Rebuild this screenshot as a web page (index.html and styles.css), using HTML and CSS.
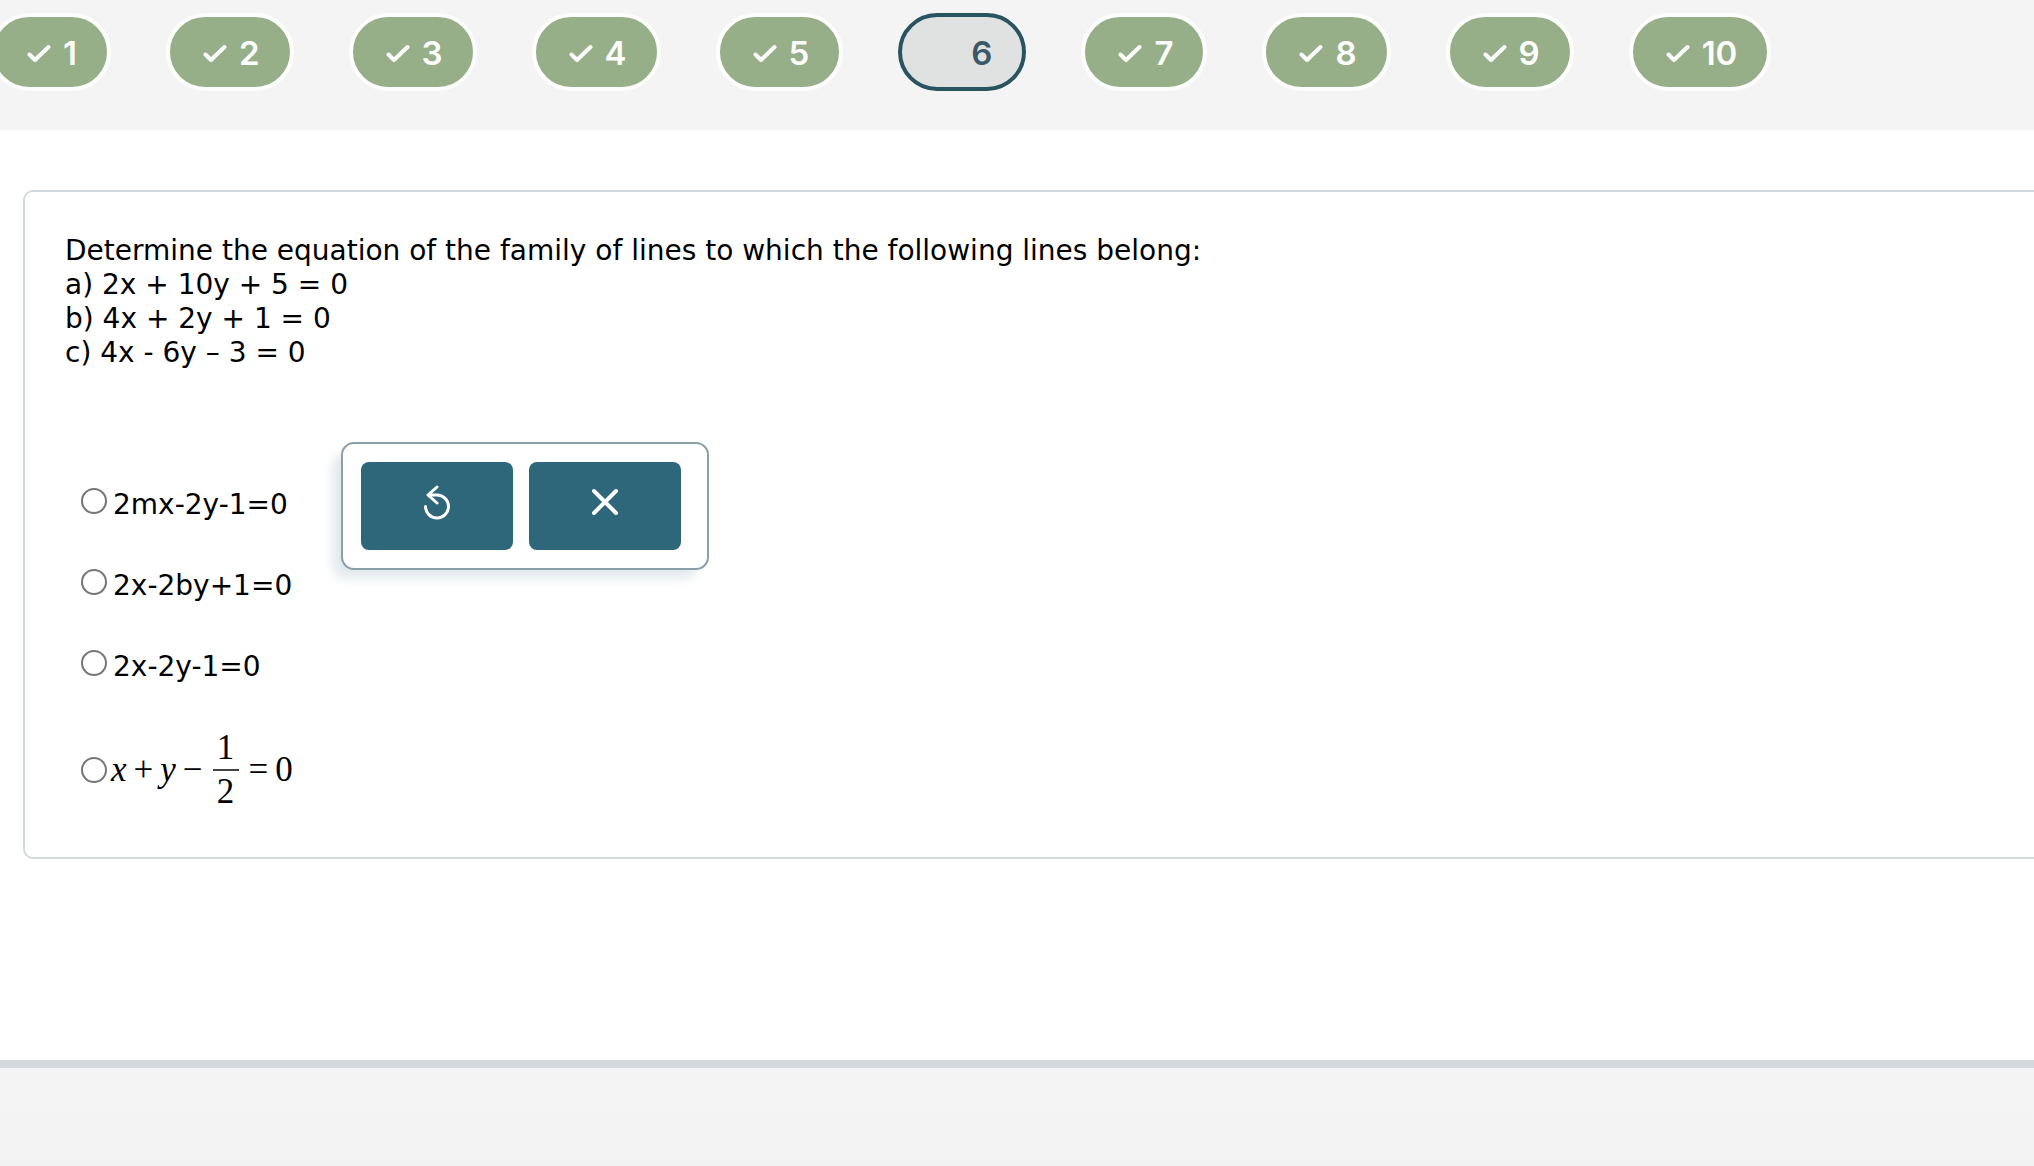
FILE: index.html
```html
<!DOCTYPE html>
<html lang="en">
<head>
    <meta charset="UTF-8">
    <meta name="viewport" content="width=device-width, initial-scale=1.0">
    <title>Family of lines</title>
    <link rel="stylesheet" href="styles.css">
</head>
<body>
    <svg class="symbols" aria-hidden="true">
        <symbol id="check" viewBox="0 0 24 24">
            <path d="M2.5 13.5L8 19L21.5 6" fill="none" stroke="currentColor" stroke-width="4" stroke-linecap="round" stroke-linejoin="round"/>
        </symbol>
    </svg>

    <nav class="steps">
        <button class="step"><svg><use href="#check"/></svg>1</button>
        <button class="step"><svg><use href="#check"/></svg>2</button>
        <button class="step"><svg><use href="#check"/></svg>3</button>
        <button class="step"><svg><use href="#check"/></svg>4</button>
        <button class="step"><svg><use href="#check"/></svg>5</button>
        <button class="step current" aria-current="step"><svg></svg>6</button>
        <button class="step"><svg><use href="#check"/></svg>7</button>
        <button class="step"><svg><use href="#check"/></svg>8</button>
        <button class="step"><svg><use href="#check"/></svg>9</button>
        <button class="step"><svg><use href="#check"/></svg>10</button>
    </nav>

    <main>
        <section class="card">
            <p class="question">
                Determine the equation of the family of lines to which the following lines belong:<br>
                a) 2x + 10y + 5 = 0<br>
                b) 4x + 2y + 1 = 0<br>
                c) 4x - 6y – 3 = 0
            </p>

            <div class="answers">
                <div class="options">
                    <label class="option"><input type="radio" name="answer"><span>2mx-2y-1=0</span></label>
                    <label class="option"><input type="radio" name="answer"><span>2x-2by+1=0</span></label>
                    <label class="option"><input type="radio" name="answer"><span>2x-2y-1=0</span></label>
                    <label class="option option-math">
                        <input type="radio" name="answer">
                        <span class="math">
                            <i>x</i><span>+</span><i>y</i><span>−</span>
                            <span class="fraction"><span>1</span><span class="denominator">2</span></span>
                            <span>=</span><span>0</span>
                        </span>
                    </label>
                </div>

                <div class="toolbar">
                    <button class="tool" aria-label="Reset">
                        <svg viewBox="0 0 44 44"><path d="M22 3L13 11L22 19M13.5 11H22A11.5 11.5 0 1 1 10.5 22.5"/></svg>
                    </button>
                    <button class="tool" aria-label="Close">
                        <svg class="close" viewBox="0 0 44 44"><path d="M11 7L33 29M33 7L11 29"/></svg>
                    </button>
                </div>
            </div>
        </section>
    </main>

    <footer></footer>
</body>
</html>
```
FILE: styles.css
```css
* {
    box-sizing: border-box;
}
body {
    margin: 0;
    min-height: 100vh;
    display: flex;
    flex-direction: column;
    overflow-x: hidden;
    font-family: Verdana, 'DejaVu Sans', sans-serif;
    font-size: 28px;
    line-height: 34px;
    color: #000;
    background-color: #fff;
}
.symbols {
    display: none;
}
.steps {
    display: flex;
    gap: 55px;
    margin-left: -10px;
    padding: 13px 0 39px;
    background-color: #f4f4f4;
}
.step {
    display: flex;
    flex-shrink: 0;
    align-items: center;
    gap: 12px;
    height: 78px;
    padding: 2px 30px 0 33px;
    border: 4px solid #fcfefc;
    border-radius: 39px;
    font-family: Inter, sans-serif;
    font-size: 33px;
    font-weight: 600;
    color: #fcfefc;
    background-color: #96af88;
}
.step svg {
    width: 24px;
    height: 24px;
}
.step.current {
    color: #3a5866;
    border-color: #28545f;
    background-color: #e0e2e1;
}
main {
    flex: 1;
    padding: 60px 0 60px 23px;
}
.card {
    padding: 42px 40px 20px;
    border: 2px solid #d3dadd;
    border-right: 0;
    border-radius: 10px 0 0 10px;
}
.question {
    margin: 0;
}
.answers {
    display: flex;
    align-items: flex-start;
    margin-top: 72px;
}
.options {
    width: 276px;
    padding: 18px 0 0 16px;
}
.option {
    display: flex;
    align-items: center;
    gap: 6px;
    height: 81px;
}
.option span {
    padding-top: 8px;
}
.option input {
    appearance: none;
    flex-shrink: 0;
    width: 26px;
    height: 26px;
    margin: 0;
    border: 2px solid #767676;
    border-radius: 50%;
    background-color: #fff;
}
.option input:checked {
    border-width: 8px;
    border-color: #2d6779;
}
.option-math {
    height: 134px;
    gap: 4px;
}
.option .math,
.option .math span {
    padding: 0;
}
.math {
    display: flex;
    align-items: center;
    gap: 7px;
    font-family: 'Times New Roman', 'Liberation Serif', serif;
    font-size: 35px;
}
.fraction {
    display: flex;
    flex-direction: column;
    width: 26px;
    margin: 0 3px;
    line-height: 42px;
    text-align: center;
}
.denominator {
    border-top: 2px solid #444;
}
.toolbar {
    display: flex;
    gap: 16px;
    padding: 18px 26px 18px 18px;
    border: 2px solid #8a9fa8;
    border-radius: 13px;
    background-color: #fff;
    box-shadow: -10px 10px 12px -2px #e0e8eb;
}
.tool {
    display: flex;
    align-items: center;
    justify-content: center;
    width: 152px;
    height: 88px;
    padding: 0;
    border: 0;
    border-radius: 8px;
    background-color: #2d6779;
}
.tool svg {
    width: 44px;
    height: 44px;
    fill: none;
    stroke: #fff;
    stroke-width: 3;
    stroke-linecap: round;
    stroke-linejoin: round;
}
.tool .close {
    stroke-width: 4;
}
footer {
    height: 106px;
    border-top: 8px solid #d3dadd;
    background: linear-gradient(#f4f4f4, #f2f2f2);
}
```
